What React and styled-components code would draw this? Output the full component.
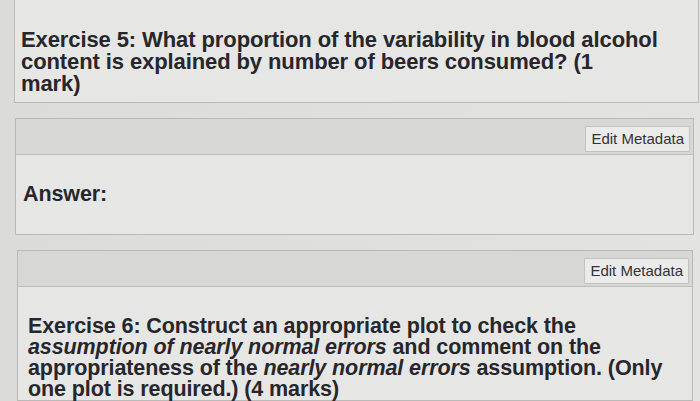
import React from 'react';
import styled, { createGlobalStyle } from 'styled-components';

const GlobalStyle = createGlobalStyle`
	html, body {
		margin: 0;
		padding: 0;
		background: #dcdcdb;
		overflow: hidden;
	}
	body {
		font-family: 'Liberation Sans', Arial, Helvetica, sans-serif;
		color: #26262b;
	}
`;

const Page = styled.div`
	width: 700px;
	height: 401px;
	display: flex;
	flex-direction: column;
	gap: 15px;
	background: linear-gradient(90deg, #dbdbda 0%, #e0e0df 60%, #e3e3e2 100%);
`;

const Cell = styled.div`
	margin-left: ${p => p.$left}px;
	width: ${p => p.$width}px;
	background: #e6e6e5;
	border: 1px solid #b9b9b8;
	border-top: ${p => (p.$noTop ? 'none' : '1px solid #b9b9b8')};
	display: flex;
	flex-direction: column;
`;

const Header = styled.div`
	height: 36px;
	box-sizing: border-box;
	background: #d7d7d6;
	border-bottom: 1px solid #bdbdbc;
	display: flex;
	justify-content: flex-end;
	align-items: flex-start;
	padding: 7px 3px 0 0;
`;

const MetaButton = styled.button`
	font-family: 'Liberation Sans', Arial, Helvetica, sans-serif;
	font-size: 15px;
	color: #333336;
	background: #ebebea;
	border: 1px solid #c2c2c1;
	border-radius: 1px;
	height: 26px;
	padding: 0 5px;
	line-height: 24px;
`;

const Body = styled.div`
	padding: ${p => p.$pad};
`;

const Heading = styled.div`
	font-weight: bold;
	font-size: ${p => p.$size}px;
	line-height: ${p => p.$lh}px;
	white-space: nowrap;
	letter-spacing: -0.1px;
`;

function App() {
	return (
		<Page>
			<GlobalStyle />
			<Cell $left={14} $width={683} $noTop>
				<Body $pad='29px 0 7px 6px'>
					<Heading $size={22} $lh={22}>
						Exercise 5: What proportion of the variability in blood alcohol
						<br />
						content is explained by number of beers consumed? (1
						<br />
						mark)
					</Heading>
				</Body>
			</Cell>
			<Cell $left={15} $width={677}>
				<Header>
					<MetaButton>Edit Metadata</MetaButton>
				</Header>
				<Body $pad='28px 0 29px 7px'>
					<Heading $size={21.5} $lh={22}>
						Answer:
					</Heading>
				</Body>
			</Cell>
			<Cell $left={17} $width={674}>
				<Header>
					<MetaButton>Edit Metadata</MetaButton>
				</Header>
				<Body $pad='29px 0 0 10px'>
					<Heading $size={21.5} $lh={21}>
						Exercise 6: Construct an appropriate plot to check the
						<br />
						<i>assumption of nearly normal errors</i> and comment on the
						<br />
						appropriateness of the <i>nearly normal errors</i> assumption. (Only
						<br />
						one plot is required.) (4 marks)
					</Heading>
				</Body>
			</Cell>
		</Page>
	);
}

export default App;
